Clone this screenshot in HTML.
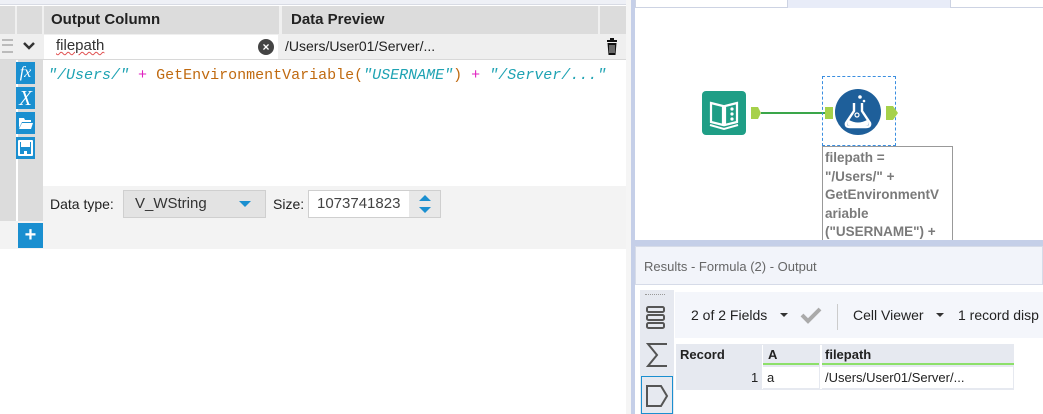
<!DOCTYPE html>
<html><head><style>
*{box-sizing:border-box;margin:0;padding:0}
body{width:1043px;height:414px;overflow:hidden;background:#fff;font-family:"Liberation Sans",sans-serif;position:relative;font-size:14px;color:#222}
.a{position:absolute}
</style></head><body>
<div class="a" style="left:0;top:0;width:626px;height:5px;background:#eef0f6;border-bottom:1px solid #d8dbe4"></div>
<div class="a" style="left:0;top:6px;width:626px;height:28px;background:#dcdcdc"></div>
<div class="a" style="left:15px;top:6px;width:2px;height:28px;background:#f0f0f0"></div>
<div class="a" style="left:42px;top:6px;width:2px;height:28px;background:#f0f0f0"></div>
<div class="a" style="left:279px;top:6px;width:3px;height:28px;background:#f0f0f0"></div>
<div class="a" style="left:598px;top:6px;width:2px;height:28px;background:#f0f0f0"></div>
<div class="a" style="left:51px;top:11px;font-weight:bold;font-size:15px">Output Column</div>
<div class="a" style="left:291px;top:11px;font-weight:bold;font-size:15px">Data Preview</div>
<div class="a" style="left:0;top:34px;width:626px;height:26px;background:#efefef;border-bottom:1px solid #d8d8d8"></div>
<div class="a" style="left:2px;top:39px;width:11px;height:14px;border-top:2px solid #bbb;border-bottom:2px solid #bbb"><div style="margin-top:3px;height:2px;background:#bbb"></div></div>
<svg class="a" style="left:22px;top:41px" width="14" height="10"><path d="M2 2 L7 7 L12 2" stroke="#333" stroke-width="2.5" fill="none"/></svg>
<div class="a" style="left:44px;top:35px;width:234px;height:24px;background:#fff"></div>
<div class="a" style="left:56px;top:37px;font-size:15px;color:#333;text-decoration:underline wavy #e05050;text-decoration-thickness:1px">filepath</div>
<div class="a" style="left:258px;top:39px;width:16px;height:16px;border-radius:50%;background:#444;color:#fff;font-size:12px;line-height:16px;text-align:center;font-weight:bold">×</div>
<div class="a" style="left:285px;top:38px;font-size:14px;color:#222">/Users/User01/Server/...</div>
<svg class="a" style="left:605px;top:37px" width="14" height="20"><rect x="2" y="3" width="10" height="2" fill="#111"/><rect x="5" y="1" width="4" height="2" fill="#111"/><path d="M2.5 6 H11.5 L10.5 18 H3.5Z" fill="#111"/><path d="M5 8v8M7 8v8M9 8v8" stroke="#eee" stroke-width="0.8"/></svg>
<div class="a" style="left:0;top:60px;width:16px;height:161px;background:#dcdcdc"></div>
<div class="a" style="left:18px;top:60px;width:25px;height:161px;background:#dcdcdc"></div>
<div class="a" style="left:16px;top:62px;width:19px;height:98px">
<div style="height:22px;background:#1a8fd0;color:#fff;font-family:'Liberation Serif',serif;font-style:italic;font-size:16px;text-align:center;line-height:21px;margin-bottom:3px">fx</div>
<div style="height:22px;background:#1a8fd0;color:#fff;font-family:'Liberation Serif',serif;font-style:italic;font-size:21px;text-align:center;line-height:22px;margin-bottom:3px">X</div>
<div style="height:22px;background:#1a8fd0;margin-bottom:3px;position:relative"><svg class="a" style="left:2px;top:3px" width="15" height="15"><path d="M1 3H6L7 5H13V7H4L1 13Z" fill="#fff"/><path d="M4 8H15L13 14H1Z" fill="#fff"/></svg></div>
<div style="height:22px;background:#1a8fd0;position:relative"><div class="a" style="left:2px;top:3px;width:15px;height:16px;border:2px solid #fff;border-radius:1px"></div><div class="a" style="left:5px;top:5px;width:9px;height:5px;background:#fff"></div><div class="a" style="left:8px;top:14px;width:3px;height:3px;background:#fff"></div></div>
</div>
<div class="a" style="left:48px;top:67px;font-family:'Liberation Mono',monospace;font-size:15px;white-space:pre"><span style="color:#1fa3b3;font-style:italic">"/Users/"</span> <span style="color:#e020c0">+</span> <span style="color:#c06a10">GetEnvironmentVariable(</span><span style="color:#1fa3b3;font-style:italic">"USERNAME"</span><span style="color:#c06a10">)</span> <span style="color:#e020c0">+</span> <span style="color:#1fa3b3;font-style:italic">"/Server/..."</span></div>
<div class="a" style="left:43px;top:186px;width:583px;height:35px;background:#f3f3f3"></div>
<div class="a" style="left:50px;top:196px;font-size:14px">Data type:</div>
<div class="a" style="left:123px;top:190px;width:143px;height:28px;background:#e3e3e3;border:1px solid #cfcfcf"></div>
<div class="a" style="left:135px;top:195px;font-size:15px;color:#333">V_WString</div>
<svg class="a" style="left:238px;top:200px" width="14" height="8"><path d="M1 1H13L7 7Z" fill="#1a8fd0"/></svg>
<div class="a" style="left:273px;top:196px;font-size:14px">Size:</div>
<div class="a" style="left:308px;top:190px;width:133px;height:28px;background:#fff;border:1px solid #cfcfcf"></div>
<div class="a" style="left:317px;top:195px;font-size:15px;color:#444">1073741823</div>
<div class="a" style="left:409px;top:191px;width:31px;height:26px;background:#e8e8e8"></div>
<svg class="a" style="left:418px;top:193px" width="14" height="22"><path d="M1 8H13L7 2Z M1 14H13L7 20Z" fill="#1a8fd0"/></svg>
<div class="a" style="left:0;top:221px;width:626px;height:28px;background:#f3f3f3"></div>
<div class="a" style="left:18px;top:223px;width:25px;height:25px;background:#1a8fd0;color:#fff;font-size:20px;font-weight:bold;text-align:center;line-height:24px">+</div>
<div class="a" style="left:626px;top:0;width:5px;height:414px;background:#f5f5f5"></div>
<div class="a" style="left:631px;top:0;width:4px;height:414px;background:#c5cfe8"></div>
<div class="a" style="left:635px;top:0;width:408px;height:8px;background:#e8ecf8"></div>
<div class="a" style="left:635px;top:0;width:153px;height:8px;background:#fff;border:1px solid #cdd3e3;border-top:none"></div>
<div class="a" style="left:950px;top:0;width:93px;height:8px;background:#fff;border:1px solid #cdd3e3;border-top:none;border-right:none"></div>
<div class="a" style="left:702px;top:91px;width:44px;height:44px;background:#1f9e86;border-radius:4px"></div>
<svg class="a" style="left:702px;top:91px" width="44" height="44"><path d="M9 12 L21 15 V34 L9 31Z M35 12 L23 15 V34 L35 31Z" fill="none" stroke="#fff" stroke-width="2.2"/><circle cx="30" cy="18" r="1.6" fill="#fff"/><circle cx="30" cy="23" r="1.6" fill="#fff"/><circle cx="30" cy="28" r="1.6" fill="#fff"/><path d="M8 34 L22 38 L36 34" fill="none" stroke="#fff" stroke-width="2"/></svg>
<svg class="a" style="left:750px;top:104px" width="85" height="18"><path d="M1 3H8L11 9L8 15H1Z" fill="#a6d14a"/><line x1="11" y1="9" x2="76" y2="9" stroke="#3aa64a" stroke-width="2"/><rect x="75" y="3" width="8" height="12" fill="#a6d14a"/></svg>
<div class="a" style="left:822px;top:76px;width:74px;height:70px;border:1px dashed #3a8ee0"></div>
<div class="a" style="left:835px;top:89px;width:46px;height:46px;border-radius:50%;background:#1e5f9a"></div>
<svg class="a" style="left:835px;top:89px" width="46" height="46"><circle cx="25" cy="8" r="1.8" fill="#fff"/><circle cx="29" cy="12" r="1.3" fill="#fff"/><path d="M19 14 V22 L11 34 Q10 38 15 38 H31 Q36 38 35 34 L27 22 V14" fill="none" stroke="#fff" stroke-width="2.4"/><path d="M14 31 Q23 36 32 31 L34 35 Q33 37 30 37H16Q13 37 12 35Z" fill="#fff"/><circle cx="22" cy="26" r="2" fill="none" stroke="#fff" stroke-width="1.2"/></svg>
<svg class="a" style="left:885px;top:104px" width="16" height="18"><path d="M1 2H8L13 9L8 16H1Z" fill="#a6d14a"/></svg>
<div class="a" style="left:822px;top:146px;width:131px;height:96px;background:#fff;border:1px solid #999;border-bottom:none"></div>
<div class="a" style="left:825px;top:149px;font-size:13.5px;font-weight:bold;color:#7a7a7a;line-height:18.5px">filepath =<br>"/Users/" +<br>GetEnvironmentV<br>ariable<br>("USERNAME") +</div>
<div class="a" style="left:635px;top:240px;width:408px;height:6px;background:#c5cfe8"></div>
<div class="a" style="left:635px;top:246px;width:408px;height:39px;background:#f2f4fa;border:1px solid #d6dbe8"></div>
<div class="a" style="left:644px;top:259px;font-size:13px;color:#666">Results - Formula (2) - Output</div>
<div class="a" style="left:635px;top:285px;width:408px;height:129px;background:#fff"></div>
<div class="a" style="left:640px;top:290px;width:34px;height:124px;background:#e6e9f0"></div>
<div class="a" style="left:675px;top:292px;width:368px;height:46px;background:#f4f6fb"></div>
<div class="a" style="left:645px;top:294px;width:20px;border-top:1px dotted #999"></div>
<svg class="a" style="left:645px;top:306px" width="22" height="24"><rect x="2" y="1" width="17" height="5" rx="1.5" fill="none" stroke="#555" stroke-width="2"/><rect x="2" y="9" width="17" height="5" rx="1.5" fill="none" stroke="#555" stroke-width="2"/><rect x="2" y="17" width="17" height="5" rx="1.5" fill="none" stroke="#555" stroke-width="2"/></svg>
<svg class="a" style="left:645px;top:342px" width="24" height="26"><path d="M22 2 H3 L12 13 L3 24 H22" fill="none" stroke="#555" stroke-width="2"/></svg>
<div class="a" style="left:641px;top:376px;width:32px;height:38px;border:1px solid #1a8fd0;background:#e6e9f0"></div>
<svg class="a" style="left:645px;top:384px" width="24" height="24"><path d="M2 2H16L22 12L16 22H2Z" fill="none" stroke="#555" stroke-width="2"/></svg>
<div class="a" style="left:691px;top:307px;font-size:14px">2 of 2 Fields</div>
<svg class="a" style="left:780px;top:313px" width="8" height="5"><path d="M0 0H8L4 4Z" fill="#333"/></svg>
<svg class="a" style="left:800px;top:306px" width="22" height="18"><path d="M2 9 L8 15 L20 3" fill="none" stroke="#aaa" stroke-width="4"/></svg>
<div class="a" style="left:837px;top:304px;width:1px;height:26px;background:#ccc"></div>
<div class="a" style="left:853px;top:307px;font-size:14px">Cell Viewer</div>
<svg class="a" style="left:936px;top:313px" width="8" height="5"><path d="M0 0H8L4 4Z" fill="#333"/></svg>
<div class="a" style="left:958px;top:307px;font-size:14px;white-space:nowrap">1 record disp</div>
<div class="a" style="left:676px;top:344px;width:338px;height:46px;background:#e6e9f0"></div>
<div class="a" style="left:762px;top:345px;width:1px;height:44px;background:#fff"></div>
<div class="a" style="left:820px;top:345px;width:2px;height:44px;background:#fff"></div>
<div class="a" style="left:763px;top:363px;width:56px;height:2px;background:#8de06a"></div>
<div class="a" style="left:822px;top:363px;width:192px;height:2px;background:#8de06a"></div>
<div class="a" style="left:680px;top:347px;font-size:13px;font-weight:bold">Record</div>
<div class="a" style="left:768px;top:347px;font-size:13px;font-weight:bold">A</div>
<div class="a" style="left:825px;top:347px;font-size:13px;font-weight:bold">filepath</div>
<div class="a" style="left:763px;top:367px;width:56px;height:21px;background:#fff"></div>
<div class="a" style="left:822px;top:367px;width:191px;height:21px;background:#fff"></div>
<div class="a" style="left:751px;top:370px;font-size:13px">1</div>
<div class="a" style="left:767px;top:370px;font-size:13px">a</div>
<div class="a" style="left:825px;top:370px;font-size:13px">/Users/User01/Server/...</div>
</body></html>
